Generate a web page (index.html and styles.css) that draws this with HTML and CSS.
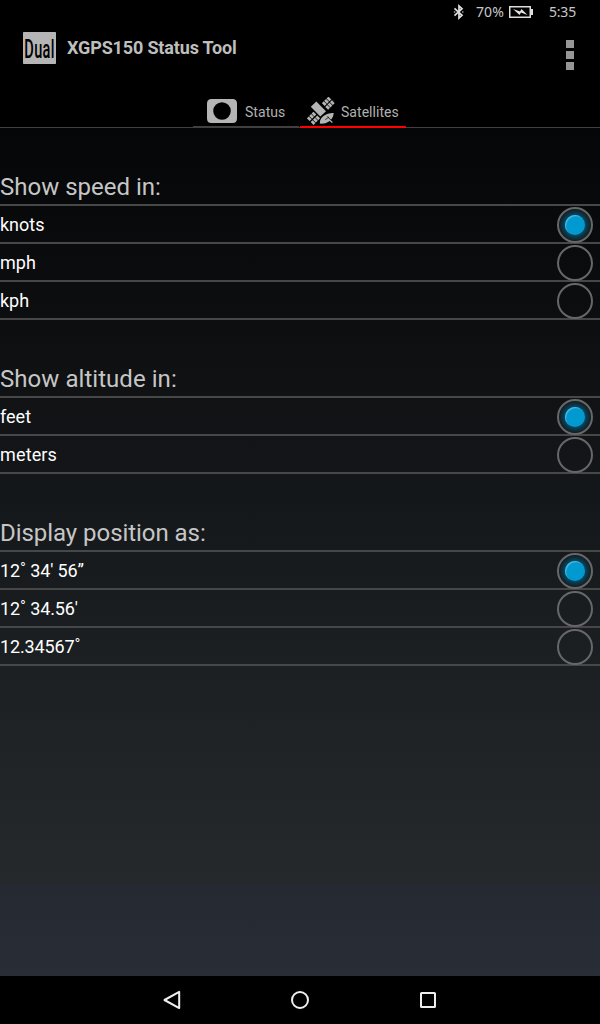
FILE: index.html
```html
<!DOCTYPE html>
<html lang="en">
<head>
<meta charset="utf-8">
<title>XGPS150 Status Tool</title>
<link rel="stylesheet" href="styles.css">
</head>
<body>
<div class="screen">
  <div class="statusbar">
    <svg class="bt" width="12" height="16" viewBox="0 0 12 16"><path d="M1.500 4.300 9 11.300 6 14V2L9 4.700 1.500 11.700" fill="none" stroke="#dedede" stroke-width="1.700"/><path d="M.8 8h1.500M9 8h1.500" stroke="#999" stroke-width="1.500"/></svg>
    <span class="pct">70%</span>
    <svg class="bat" width="25" height="14" viewBox="0 0 25 14"><rect x=".75" y=".75" width="20.500" height="10.500" fill="none" stroke="#ddd" stroke-width="1.500"/><path d="M22 3h2v6h-2z" fill="#ddd"/><path d="M4 3l7 2.500 1.500-2.500 6 6-6.500-2.500-1.500 2.500z" fill="#e4e4e4"/></svg>
    <span class="clock">5:35</span>
  </div>
  <header class="actionbar">
    <svg class="logo" width="33" height="32" viewBox="0 0 33 32"><rect width="33" height="32" rx=".7" fill="#b5b5b5"/><text class="logo-text" transform="translate(1.300 25.700) scale(.56 1)" textLength="54" lengthAdjust="spacing">Dual</text></svg>
    <h1 class="title">XGPS150 Status Tool</h1>
    <div class="overflow"><i></i><i></i><i></i></div>
  </header>
  <nav class="tabs">
    <div class="tab status">
      <svg width="30" height="24" viewBox="0 0 30 24"><path fill="#b5b5b5" fill-rule="evenodd" d="M4.500 0h21q4.500 0 4.500 4.500v15q0 4.500-4.500 4.500h-21q-4.500 0-4.500-4.500v-15q0-4.500 4.500-4.500zM15 3.200a8.800 8.800 0 1 0 0 17.600 8.800 8.800 0 0 0 0-17.600z"/></svg>
      <span>Status</span>
    </div>
    <div class="tab sats active">
      <svg width="28" height="28" viewBox="0 0 28 28">
        <g fill="#b5b5b5">
          <path d="M3.800 9.700 9.300 4.400l9.700 9.900-5.700 5.200z"/>
          <path d="M12.800 26.600q-.5-4.600 4-7.900 4.400-3.200 9.900-2.600-.4 5.400-4.700 8.300-4.200 2.900-9.200 2.200z"/>
        </g>
        <g fill="none" stroke="#b5b5b5" stroke-width="4" stroke-dasharray="2.700 .6">
          <path d="M16.300 7.600 23.200.7M19.700 11.300l7.100-7.100"/>
          <path d="M1.300 22.700 8.200 15.800M5.100 26.500l7-7"/>
        </g>
        <path d="M20.300 19.700l5.500 5.200" stroke="#000"/>
        <path d="M19 20l6.400 5.500" stroke="#b5b5b5" stroke-width="1.200"/>
        <path d="M18.300 22.700 22 20" stroke="#000" stroke-width=".7"/>
      </svg>
      <span>Satellites</span>
    </div>
  </nav>
  <main class="settings">
    <section><h2>Show speed in:</h2>
      <div class="row"><span>knots</span><b class="radio on"></b></div>
      <div class="row"><span>mph</span><b class="radio"></b></div>
      <div class="row"><span>kph</span><b class="radio"></b></div>
    </section>
    <section><h2 class="altitude">Show altitude in:</h2>
      <div class="row"><span>feet</span><b class="radio on"></b></div>
      <div class="row"><span class="meters">meters</span><b class="radio"></b></div>
    </section>
    <section><h2 class="position">Display position as:</h2>
      <div class="row digits"><span>12˚ 34' 56”</span><b class="radio on"></b></div>
      <div class="row digits"><span>12˚ 34.56'</span><b class="radio"></b></div>
      <div class="row digits"><span>12.34567˚</span><b class="radio"></b></div>
    </section>
  </main>
  <footer class="navbar">
    <svg width="20" height="20" viewBox="0 0 20 20"><path d="M2.500 10 17.200 1.900v16.200z"/></svg>
    <svg width="20" height="20" viewBox="0 0 20 20"><circle cx="10" cy="10" r="8"/></svg>
    <svg width="20" height="20" viewBox="0 0 20 20"><rect x="3" y="3" width="14" height="14" rx=".5"/></svg>
  </footer>
</div>
</body>
</html>
```
FILE: styles.css
```css
* { box-sizing: border-box; }
body { margin: 0; background: #000; font-family: Roboto, sans-serif; }
svg { display: block; flex: none; }
.screen { width: 600px; height: 1024px; display: flex; flex-direction: column; overflow: hidden; }
.statusbar { height: 24px; display: flex; align-items: center; justify-content: flex-end; padding-right: 24px; color: #c8c8c8; font: 14px/24px "Noto Sans", sans-serif; }
.bt { margin-right: 11px; }
.pct { width: 33px; letter-spacing: .1px; }
.bat { margin-top: 2px; }
.clock { width: 27px; margin-left: 15px; letter-spacing: -.2px; }
.actionbar { height: 72px; display: flex; align-items: flex-start; padding: 8px 26px 0 23px; }
.logo { overflow: visible; }
.logo-text { font: 500 26px Roboto, sans-serif; fill: #000; }
.title { margin: 5px 0 0 11px; font-size: 18px; line-height: 22px; font-weight: 700; letter-spacing: -.15px; color: #bebebe; }
.overflow { margin: 8px 0 0 auto; display: grid; gap: 3px; }
.overflow i { width: 8px; height: 8px; background: #969696; }
.tabs { height: 32px; display: flex; padding-left: 193px; background: linear-gradient(#404040, #404040) 0 31px / 100% 1px no-repeat; }
.tab { width: 106px; height: 32px; display: flex; align-items: center; color: #b0b0b0; font-size: 14px; }
.tab span { padding-top: 2px; letter-spacing: .04px; }
.tab.status { padding-left: 14px; gap: 8px; border-bottom: 2px solid #404040; margin-right: 1px; }
.tab.sats { padding-left: 7px; gap: 6px; border-bottom: 2px solid #f00; }
.settings { flex: 1; background: linear-gradient(#050607, #0d0e10 23%, #15181b 45%, #1c2023 64%, #202427 75%, #25292b 88.800%, #252932 89.400%, #292d36); }
section { padding-top: 42px; }
h2 { margin: 0; height: 36px; border-bottom: 2px solid #474747; font-size: 24px; line-height: 34px; font-weight: 400; color: #c6c6c6; }
.altitude { letter-spacing: .05px; }
.position { letter-spacing: -.05px; }
.row { height: 38px; border-bottom: 2px solid #474747; display: flex; align-items: center; justify-content: space-between; padding-right: 7px; color: #fff; font-size: 18px; }
.meters { letter-spacing: .15px; }
.digits { letter-spacing: -.13px; }
.radio { width: 36px; height: 36px; margin-top: 2px; border: 2px solid #666769; border-radius: 50%; display: grid; place-items: center; }
.radio.on { background: radial-gradient(circle closest-side, #075474 55%, #0a3b50 72%, #10262e 92%, #15191b); }
.radio.on::after { content: ""; width: 20px; height: 20px; border-radius: 50%; background: #0099d0; box-shadow: inset 1px 1px 1px #55bce0; }
.navbar { height: 48px; display: flex; justify-content: center; align-items: center; gap: 108px; background: #000; }
.navbar svg { fill: none; stroke: #eee; stroke-width: 2; stroke-linejoin: round; }
```
